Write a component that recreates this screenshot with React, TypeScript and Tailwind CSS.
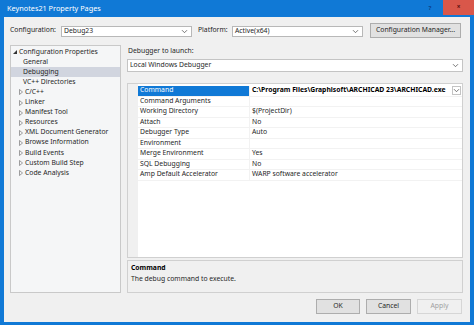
import React from "react";

const font = "font-['Noto_Sans',sans-serif]";

function Chevron() {
  return (
    <svg width="7" height="5" viewBox="0 0 7 5" className="shrink-0">
      <path d="M1 1.2 L3.5 3.7 L6 1.2" fill="none" stroke="#555" strokeWidth="0.8" />
    </svg>
  );
}

const tree: { label: string; kind: "root" | "leaf" | "collapsed"; selected?: boolean }[] = [
  { label: "Configuration Properties", kind: "root" },
  { label: "General", kind: "leaf" },
  { label: "Debugging", kind: "leaf", selected: true },
  { label: "VC++ Directories", kind: "leaf" },
  { label: "C/C++", kind: "collapsed" },
  { label: "Linker", kind: "collapsed" },
  { label: "Manifest Tool", kind: "collapsed" },
  { label: "Resources", kind: "collapsed" },
  { label: "XML Document Generator", kind: "collapsed" },
  { label: "Browse Information", kind: "collapsed" },
  { label: "Build Events", kind: "collapsed" },
  { label: "Custom Build Step", kind: "collapsed" },
  { label: "Code Analysis", kind: "collapsed" },
];

const props: [string, string][] = [
  ["Command", "C:\\Program Files\\Graphisoft\\ARCHICAD 23\\ARCHICAD.exe"],
  ["Command Arguments", ""],
  ["Working Directory", "$(ProjectDir)"],
  ["Attach", "No"],
  ["Debugger Type", "Auto"],
  ["Environment", ""],
  ["Merge Environment", "Yes"],
  ["SQL Debugging", "No"],
  ["Amp Default Accelerator", "WARP software accelerator"],
];

export default function App() {
  return (
    <div className={`${font} w-[474px] h-[325px] bg-[#1079d6] flex flex-col text-[6.8px] leading-none text-[#262626]`}>
      {/* title bar */}
      <div className="h-[17px] flex items-start shrink-0">
        <div className="flex-1 h-[17px] flex items-center pl-[7px] text-white text-[7.3px]">Keynotes21 Property Pages</div>
        <div className="w-[26px] h-[15px] flex items-center justify-center text-[#0a3f8a] text-[6px] font-bold">?</div>
        <div className="w-[31px] h-[15px] bg-[#d9574a] flex items-center justify-center text-[#5a1010] text-[6.5px] font-bold">×</div>
      </div>
      {/* body */}
      <div className="flex-1 mx-[4px] mb-[3px] bg-[#f0f0f0] flex flex-col">
        {/* config row */}
        <div className="h-[28px] flex items-start pt-[6px] pl-[6px]">
          <div className="h-[15px] flex items-center w-[51px]">Configuration:</div>
          <div className="mt-[3px] w-[131px] h-[11px] bg-white border border-[#b8b8b8] flex items-center justify-between pl-[2px] pr-[3px]">
            <span>Debug23</span>
            <Chevron />
          </div>
          <div className="h-[15px] flex items-center ml-[6px] w-[34px]">Platform:</div>
          <div className="mt-[3px] w-[131px] h-[11px] bg-white border border-[#b8b8b8] flex items-center justify-between pl-[2px] pr-[3px]">
            <span>Active(x64)</span>
            <Chevron />
          </div>
          <div className="ml-[7px] w-[91px] h-[15px] bg-[#e1e1e1] border border-[#adadad] flex items-center justify-center">
            Configuration Manager...
          </div>
        </div>
        {/* main */}
        <div className="flex flex-1">
          {/* tree */}
          <div className="ml-[6px] w-[111px] h-[248px] bg-[#f5f6f7] border border-[#c9c9c9] pt-[1px]">
            {tree.map((t) => (
              <div
                key={t.label}
                className={`h-[10.1px] flex items-center ${t.selected ? "bg-[#d1d5df]" : ""}`}
              >
                {t.kind === "root" && (
                  <>
                    <svg width="4" height="4" viewBox="0 0 4 4" className="ml-[2px] mr-[2px]">
                      <path d="M4 0 L4 4 L0 4 Z" fill="#333" />
                    </svg>
                    <span>{t.label}</span>
                  </>
                )}
                {t.kind === "leaf" && <span className="ml-[12px]">{t.label}</span>}
                {t.kind === "collapsed" && (
                  <>
                    <svg width="4" height="6" viewBox="0 0 4 6" className="ml-[8px] mr-[2px]">
                      <path d="M0.5 0.5 L3.5 3 L0.5 5.5 Z" fill="none" stroke="#777" strokeWidth="0.7" />
                    </svg>
                    <span>{t.label}</span>
                  </>
                )}
              </div>
            ))}
          </div>
          {/* right */}
          <div className="ml-[6px] w-[336px] flex flex-col">
            <div className="h-[14px] flex items-center pl-[1px] mt-[-1px]">Debugger to launch:</div>
            <div className="mt-[1px] h-[13px] bg-white border border-[#c4c4c4] flex items-center justify-between pl-[2px] pr-[3px]">
              <span>Local Windows Debugger</span>
              <Chevron />
            </div>
            {/* grid */}
            <div className="mt-[11px] h-[175px] bg-white border border-[#d0d0d0] flex">
              <div className="w-[10px] bg-[#f0f0f0]" />
              <div className="flex-1 pt-[2px]">
                {props.map(([k, v], i) => (
                  <div key={k} className="h-[10.5px] flex border-b border-[#f2f2f2]">
                    <div
                      className={`w-[112px] flex items-center pl-[2px] border-r border-[#f2f2f2] ${
                        i === 0 ? "bg-[#1079d6] text-white" : ""
                      }`}
                    >
                      {k}
                    </div>
                    <div className={`flex-1 flex items-center pl-[2px] ${i === 0 ? "font-bold text-black" : ""}`}>
                      <span className="flex-1">{v}</span>
                      {i === 0 && (
                        <div className="w-[9px] h-[9px] border border-[#c4c4c4] flex items-center justify-center mr-[1px]">
                          <Chevron />
                        </div>
                      )}
                    </div>
                  </div>
                ))}
              </div>
            </div>
            {/* description */}
            <div className="mt-[2px] h-[33px] border border-[#d0d0d0] pl-[3px] pt-[4px] flex flex-col gap-[4px]">
              <div className="font-bold text-black">Command</div>
              <div>The debug command to execute.</div>
            </div>
          </div>
        </div>
        {/* buttons */}
        <div className="h-[29px] flex items-start justify-end pt-[6px] pr-[8px] gap-[6px]">
          <div className="w-[44px] h-[15px] bg-[#e1e1e1] border border-[#adadad] flex items-center justify-center">OK</div>
          <div className="w-[45px] h-[15px] bg-[#e1e1e1] border border-[#adadad] flex items-center justify-center">Cancel</div>
          <div className="w-[45px] h-[15px] bg-[#f0f0f0] border border-[#d6d6d6] flex items-center justify-center text-[#a0a0a0]">Apply</div>
        </div>
      </div>
    </div>
  );
}
